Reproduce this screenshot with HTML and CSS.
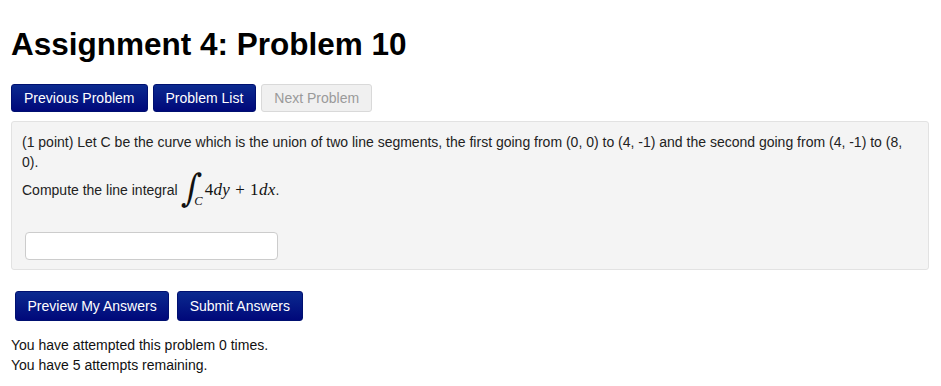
FILE: index.html
```html
<!DOCTYPE html>
<html>
<head>
<meta charset="utf-8">
<link rel="stylesheet" href="styles.css">
</head>
<body>
<div class="page">
  <h1 class="title">Assignment 4: Problem 10</h1>
  <div class="nav">
    <button class="btn">Previous Problem</button>
    <button class="btn">Problem List</button>
    <button class="btn disabled">Next Problem</button>
  </div>
  <div class="problem">
    <p class="statement">(1 point) Let C be the curve which is the union of two line segments, the first going from (0, 0) to (4, -1) and the second going from (4, -1) to (8, 0).</p>
    <p class="compute">Compute the line integral <span class="math"><span class="int">∫</span><span class="sub">C</span><span class="expr"><span class="num">4</span><i>dy</i><span class="op">+</span><span class="num">1</span><i>dx</i></span></span>.</p>
    <input class="answer" type="text">
  </div>
  <div class="actions">
    <button class="btn big">Preview My Answers</button>
    <button class="btn big">Submit Answers</button>
  </div>
  <p class="info">You have attempted this problem 0 times.<br>You have 5 attempts remaining.</p>
</div>
</body>
</html>
```
FILE: styles.css
```css
html, body {
  margin: 0;
  padding: 0;
  background: #fff;
}
body {
  font-family: "Liberation Sans", Arial, sans-serif;
  font-size: 14px;
  color: #333;
}
.page {
  padding: 0 12px 0 11px;
}
.title {
  margin: 0;
  padding-top: 26px;
  font-size: 31.5px;
  line-height: 36px;
  font-weight: bold;
  color: #000;
}
.nav {
  display: flex;
  gap: 5px;
  margin-top: 22px;
}
.btn {
  font-family: "Liberation Sans", Arial, sans-serif;
  font-size: 14px;
  line-height: 20px;
  padding: 3px 12px;
  border: 1px solid #001070;
  border-radius: 3px;
  background: linear-gradient(#0b2a8f, #00087a);
  color: #fff;
  cursor: pointer;
}
.btn.disabled {
  background: #f0f0f0;
  border-color: #d9d9d9;
  color: #9a9a9a;
}
.problem {
  margin-top: 9px;
  background: #f4f4f4;
  border: 1px solid #e2e2e2;
  border-radius: 3px;
  padding: 10px 10px 9px 10px;
  color: #222;
}
.statement {
  margin: 0;
  line-height: 20px;
}
.compute {
  margin: 8px 0 0;
  line-height: 20px;
}
.math {
  font-family: "Liberation Serif", "Times New Roman", serif;
  font-size: 17px;
  line-height: 0;
  color: #111;
}
.int {
  display: inline-block;
  font-family: "DejaVu Serif", serif;
  font-size: 38px;
  line-height: 0;
  position: relative;
  top: 6px;
  transform: scaleX(0.85) skewX(-10deg);
  margin-left: 0;
}
.sub {
  font-style: italic;
  font-size: 12.5px;
  line-height: 0;
  position: relative;
  top: 10px;
  margin-left: -7px;
}
.expr {
  margin-left: 2px;
  letter-spacing: 0.3px;
}
.expr i {
  font-style: italic;
}
.op {
  margin: 0 5px;
}
.answer {
  display: block;
  margin: 32px 0 0 3px;
  width: 253px;
  height: 28px;
  box-sizing: border-box;
  border: 1px solid #ccc;
  border-radius: 4px;
  background: #fff;
}
.actions {
  display: flex;
  gap: 8px;
  margin: 21px 0 0 4px;
}
.btn.big {
  padding: 4px 11.5px;
}
.info {
  margin: 14px 0 0;
  line-height: 20px;
  color: #111;
}
```
